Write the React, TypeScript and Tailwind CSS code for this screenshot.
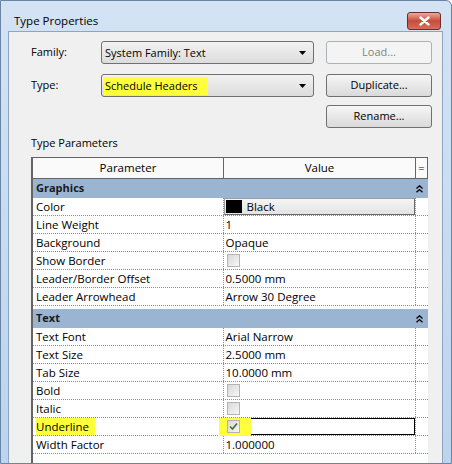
import React from "react";

const font = { fontFamily: '"Segoe UI", "Open Sans", "Noto Sans", sans-serif' };

function Arrow() {
  return (
    <svg width="7" height="4" viewBox="0 0 7 4">
      <path d="M0 0H7L3.5 4Z" fill="#000" />
    </svg>
  );
}

function Combo({ value, highlight }: { value: string; highlight?: boolean }) {
  return (
    <div className="flex h-[23px] w-[213px] items-center justify-between rounded-[3px] border border-[#707070] bg-gradient-to-b from-[#f2f2f2] to-[#dcdcdc] pl-[2px] pr-[7px]">
      <span className={`px-[1px] leading-[18px] ${highlight ? "bg-[#ffff3c] pr-[10px]" : ""}`}>{value}</span>
      <Arrow />
    </div>
  );
}

function Btn({ label, disabled }: { label: string; disabled?: boolean }) {
  return (
    <div
      className={`flex h-[23px] w-[106px] items-center justify-center rounded-[3px] border ${
        disabled
          ? "border-[#adb2b5] bg-[#f4f4f4] text-[#838383]"
          : "border-[#707070] bg-gradient-to-b from-[#f6f6f6] to-[#dadada] text-black"
      }`}
    >
      {label}
    </div>
  );
}

function Check({ checked, highlight }: { checked?: boolean; highlight?: boolean }) {
  return (
    <div className={`flex h-[18px] items-center px-[3px] ${highlight ? "-ml-[6px] w-[32px] bg-[#ffff3c] pl-[8px]" : ""}`}>
      <div className="flex h-[13px] w-[13px] items-center justify-center border border-[#b4b4b4] bg-gradient-to-br from-[#d8d8d8] to-[#f7f7f7]">
        {checked && (
          <svg width="9" height="9" viewBox="0 0 9 9">
            <path d="M1 4.5L3.5 7L8 1.5" stroke="#4a6f2a" strokeWidth="1.6" fill="none" />
          </svg>
        )}
      </div>
    </div>
  );
}

type Row = { name: string; value?: string; kind?: "text" | "check" | "color"; checked?: boolean; hl?: boolean };

const graphics: Row[] = [
  { name: "Color", kind: "color", value: "Black" },
  { name: "Line Weight", value: "1" },
  { name: "Background", value: "Opaque" },
  { name: "Show Border", kind: "check" },
  { name: "Leader/Border Offset", value: "0.5000 mm" },
  { name: "Leader Arrowhead", value: "Arrow 30 Degree" },
];

const textRows: Row[] = [
  { name: "Text Font", value: "Arial Narrow" },
  { name: "Text Size", value: "2.5000 mm" },
  { name: "Tab Size", value: "10.0000 mm" },
  { name: "Bold", kind: "check" },
  { name: "Italic", kind: "check" },
  { name: "Underline", kind: "check", checked: true, hl: true },
  { name: "Width Factor", value: "1.000000" },
];

function GroupHeader({ title }: { title: string }) {
  return (
    <div className="flex h-[19px] items-center justify-between bg-[#9bb4d2] pl-[3px] pr-[5px] font-bold text-[#1a1a1a]">
      <span>{title}</span>
      <svg width="7" height="8" viewBox="0 0 7 8">
        <path d="M0.5 3.5L3.5 0.8L6.5 3.5M0.5 7.3L3.5 4.6L6.5 7.3" stroke="#000" strokeWidth="1.3" fill="none" />
      </svg>
    </div>
  );
}

function ParamRow({ row }: { row: Row }) {
  return (
    <div className="flex h-[18px] border-b border-dotted border-[#8c8c8c] text-[11.5px]">
      <div className="flex w-[191px] items-center border-r border-dotted border-[#8c8c8c] pl-[3px]">
        <span className={row.hl ? "bg-[#ffff3c] pr-[6px]" : ""}>{row.name}</span>
      </div>
      {row.kind === "color" ? (
        <div className="flex w-[192px] items-center border border-[#a0a0a0] border-b-[#6a6a6a] border-r-[#6a6a6a] bg-gradient-to-b from-[#f4f4f4] to-[#e4e4e4] pl-[1px]">
          <div className="mr-[5px] h-[13px] w-[16px] bg-black" />
          <span>Black</span>
        </div>
      ) : row.hl ? (
        <div className="flex w-[192px] items-center border border-black">
          <Check checked highlight />
        </div>
      ) : row.kind === "check" ? (
        <div className="flex w-[192px] items-center">
          <Check />
        </div>
      ) : (
        <div className="flex w-[192px] items-center pl-[2px]">{row.value}</div>
      )}
      <div className="w-[13px] border-l border-dotted border-[#8c8c8c]" />
    </div>
  );
}

export default function App() {
  return (
    <div
      className="flex h-[464px] w-[452px] flex-col overflow-hidden rounded-tr-[6px] border border-[#6a84a3] bg-gradient-to-b from-[#d3e3f4] to-[#bcd4ee] text-[11px] text-black"
      style={font}
    >
      {/* title bar */}
      <div className="flex h-[30px] shrink-0 items-center justify-between pl-[13px] pr-[10px]">
        <span className="pt-[9px] text-[11.5px]">Type Properties</span>
        <div className="mt-[10px] flex h-[18px] w-[34px] items-center justify-center rounded-[3px] border border-[#6e2c2c] bg-gradient-to-b from-[#e9a99b] via-[#c94a3a] to-[#d2705e]">
          <svg width="11" height="10" viewBox="0 0 11 10">
            <path d="M1.5 1.5L9.5 8.5M9.5 1.5L1.5 8.5" stroke="#fff" strokeWidth="2.4" strokeLinecap="round" />
          </svg>
        </div>
      </div>

      {/* client */}
      <div className="ml-[7px] mr-[8px] flex flex-1 flex-col border border-b-0 border-[#8ea4bf] bg-[#f0f0f0] pl-[22px] pt-[9px]">
        <div className="flex items-center">
          <span className="w-[70px]">Family:</span>
          <Combo value="System Family: Text" />
          <div className="ml-[12px]">
            <Btn label="Load..." disabled />
          </div>
        </div>
        <div className="mt-[10px] flex items-center">
          <span className="w-[70px]">Type:</span>
          <Combo value="Schedule Headers" highlight />
          <div className="ml-[12px]">
            <Btn label="Duplicate..." />
          </div>
        </div>
        <div className="mt-[8px] flex">
          <div className="ml-[295px]">
            <Btn label="Rename..." />
          </div>
        </div>

        <div className="mt-[7px] leading-[16px]">Type Parameters</div>

        {/* table */}
        <div className="mt-[6px] flex w-[397px] flex-1 flex-col border-l-2 border-t border-[#646464] bg-white">
          <div className="flex h-[21px] shrink-0 border-b border-[#646464] bg-[#fafafa] text-[11.5px]">
            <div className="flex w-[191px] items-center justify-center border-r border-[#646464]">Parameter</div>
            <div className="flex w-[192px] items-center justify-center border-r border-[#646464]">Value</div>
            <div className="flex w-[12px] items-center justify-center border-r border-[#646464] text-[11px]">=</div>
          </div>
          <GroupHeader title="Graphics" />
          {graphics.map((r) => (
            <ParamRow key={r.name} row={r} />
          ))}
          <div className="h-[3px] shrink-0" />
          <GroupHeader title="Text" />
          {textRows.map((r) => (
            <ParamRow key={r.name} row={r} />
          ))}
        </div>
      </div>
    </div>
  );
}
